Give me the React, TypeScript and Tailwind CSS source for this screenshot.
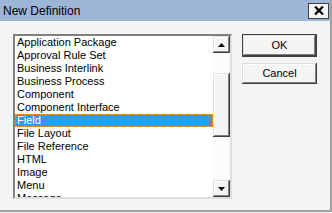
import React from "react";

const items = [
  "Application Package",
  "Approval Rule Set",
  "Business Interlink",
  "Business Process",
  "Component",
  "Component Interface",
  "Field",
  "File Layout",
  "File Reference",
  "HTML",
  "Image",
  "Menu",
  "Message",
];

const bevel =
  "shadow-[inset_-1px_-1px_#404040,inset_1px_1px_#dfdfdf,inset_-2px_-2px_#808080,inset_2px_2px_#ffffff]";

function ScrollButton({ up }: { up?: boolean }) {
  return (
    <div className={`h-[17px] w-[17px] shrink-0 bg-[#f4f4f4] flex items-center justify-center ${bevel}`}>
      <svg width="7" height="4" viewBox="0 0 7 4">
        {up ? <path d="M3.5 0 L7 4 L0 4 Z" fill="#000" /> : <path d="M0 0 L7 0 L3.5 4 Z" fill="#000" />}
      </svg>
    </div>
  );
}

export default function App() {
  return (
    <div
      className="w-[332px] h-[213px] overflow-hidden bg-[#f4f4f4] text-black"
      style={{ fontFamily: '"Liberation Sans", Arial, sans-serif' }}
    >
      <div className="w-full h-[212px] flex flex-col border-r-2 border-b-2 border-[#a0a0a0]">
        {/* title bar */}
        <div className="h-[21px] shrink-0 bg-[#9db5d7] flex items-center justify-between pl-[3px] pr-[1px]">
          <span className="text-[12px] leading-none">New Definition</span>
          <div className="w-[21px] h-[16px] bg-[#f4f4f4] border border-[#404040] flex items-center justify-center">
            <svg width="10" height="9" viewBox="0 0 10 9">
              <path d="M1 0.5 L9 8.5 M9 0.5 L1 8.5" stroke="#000" strokeWidth="2.2" />
            </svg>
          </div>
        </div>

        {/* body */}
        <div className="flex pl-[13px] pt-[13px] gap-[10px]">
          <div className="w-[219px] h-[165px] border-2 border-t-[#808080] border-l-[#808080] border-r-[#dfdfdf] border-b-[#dfdfdf] bg-white flex">
            <div className="flex-1 overflow-hidden">
              {items.map((it) =>
                it === "Field" ? (
                  <div
                    key={it}
                    className="h-[13px] bg-[#3399ff] text-white text-[11px] leading-[11px] pl-[1px] border border-dotted border-[#ff9a33]"
                  >
                    {it}
                  </div>
                ) : (
                  <div key={it} className="h-[13px] text-[11px] leading-[13px] pl-[2px] whitespace-nowrap">
                    {it}
                  </div>
                )
              )}
            </div>
            <div className="w-[17px] flex flex-col bg-[#fbfbfb]">
              <ScrollButton up />
              <div className="h-[20px]" />
              <div className={`h-[64px] bg-[#f4f4f4] ${bevel}`} />
              <div className="flex-1" />
              <ScrollButton />
            </div>
          </div>

          <div className="flex flex-col gap-[6px]">
            <button className="w-[75px] h-[23px] border border-[#404040] bg-[#f4f4f4] p-0">
              <div className={`w-full h-full flex items-center justify-center text-[11px] ${bevel}`}>OK</div>
            </button>
            <button
              className={`w-[75px] h-[21px] bg-[#f4f4f4] flex items-center justify-center text-[11px] ${bevel}`}
            >
              Cancel
            </button>
          </div>
        </div>
      </div>
    </div>
  );
}
